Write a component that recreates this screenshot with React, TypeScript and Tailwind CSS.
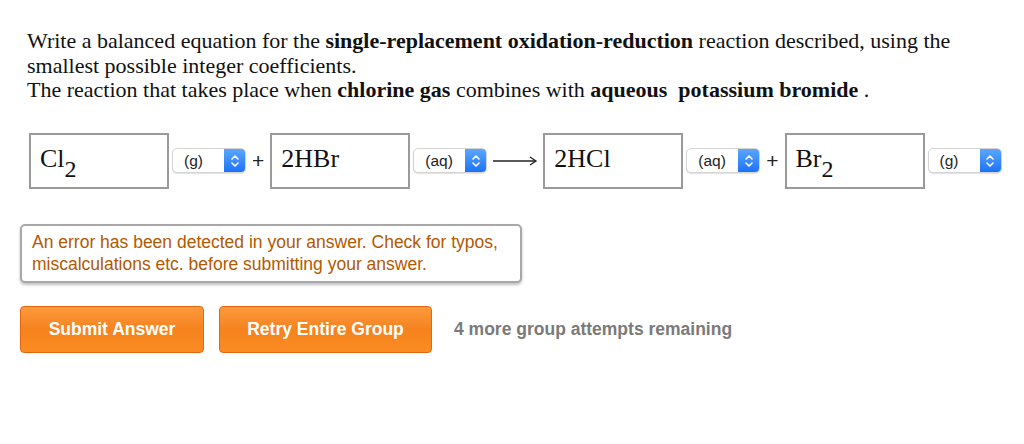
import React from 'react'

function Stepper() {
  return (
    <span className="flex h-full w-[21px] items-center justify-center rounded-r-[4px] bg-gradient-to-b from-[#5aa6ff] to-[#1a72f5]">
      <svg width="10" height="16" viewBox="0 0 10 16" fill="none" stroke="white" strokeWidth="1.6" strokeLinecap="round" strokeLinejoin="round">
        <path d="M2 6 L5 3 L8 6" />
        <path d="M2 10 L5 13 L8 10" />
      </svg>
    </span>
  )
}

function StateSelect({ value }: { value: string }) {
  return (
    <div className="ml-[3px] flex h-[25px] w-[74px] shrink-0 items-stretch rounded-[5px] border border-[#d4d4d4] bg-white shadow-[0_1px_1px_rgba(0,0,0,0.12)]">
      <span className="flex flex-1 items-center pl-[11px] font-['Liberation_Sans',Arial,sans-serif] text-[15.5px] text-[#222]">{value}</span>
      <Stepper />
    </div>
  )
}

function Species({ main, sub }: { main: string; sub?: string }) {
  return (
    <div className="flex h-[56px] w-[140px] shrink-0 items-start border-2 border-[#9a9a9a] bg-white pl-[9px] pt-[9px] font-['Liberation_Serif','Times_New_Roman',serif] text-[26px] leading-[30px] text-[#111]">
      <span>{main}</span>
      {sub && <span className="mt-[12px] text-[24px] leading-[26px]">{sub}</span>}
    </div>
  )
}

function Plus() {
  return <span className="shrink-0 px-[6px] font-['Liberation_Sans',Arial,sans-serif] text-[21px] text-[#222]">+</span>
}

export default function App() {
  return (
    <div className="min-h-screen bg-white px-[27px] pt-[29px]">
      {/* Question */}
      <div className="font-['Liberation_Serif','Times_New_Roman',serif] text-[22px] leading-[24.5px] text-[#111]">
        <p>
          Write a balanced equation for the <b>single-replacement oxidation-reduction</b> reaction described, using the
          <br />
          smallest possible integer coefficients.
        </p>
        <p>
          The reaction that takes place when <b>chlorine gas</b> combines with <b>aqueous&nbsp; potassium bromide</b> .
        </p>
      </div>

      {/* Equation */}
      <div className="mt-[30px] ml-[2px] flex items-center">
        <Species main="Cl" sub="2" />
        <StateSelect value="(g)" />
        <Plus />
        <Species main="2HBr" />
        <StateSelect value="(aq)" />
        <svg width="48" height="12" viewBox="0 0 48 12" className="mx-[4px] shrink-0" fill="none" stroke="#222" strokeWidth="1.3">
          <path d="M2 6 H44" />
          <path d="M39 2 L45 6 L39 10" />
        </svg>
        <Species main="2HCl" />
        <StateSelect value="(aq)" />
        <Plus />
        <Species main="Br" sub="2" />
        <StateSelect value="(g)" />
      </div>

      {/* Error */}
      <div className="mt-[35px] -ml-[7px] w-[502px] rounded-[5px] border-2 border-[#a8a8a8] bg-white px-[10px] pt-[5px] pb-[6px] shadow-[0_2px_3px_rgba(0,0,0,0.25)] font-['Liberation_Sans',Arial,sans-serif] text-[17.5px] leading-[22px] text-[#b35900]">
        An error has been detected in your answer. Check for typos,
        <br />
        miscalculations etc. before submitting your answer.
      </div>

      {/* Actions */}
      <div className="mt-[23px] -ml-[7px] flex items-center font-['Liberation_Sans',Arial,sans-serif] text-[17.5px] font-bold">
        <button className="h-[47px] w-[184px] rounded-[4px] border border-[#e8650f] bg-gradient-to-b from-[#fd9a3c] via-[#f5821d] to-[#fb8c24] text-white">
          Submit Answer
        </button>
        <button className="ml-[15px] h-[47px] w-[213px] rounded-[4px] border border-[#e8650f] bg-gradient-to-b from-[#fd9a3c] via-[#f5821d] to-[#fb8c24] text-white">
          Retry Entire Group
        </button>
        <span className="ml-[22px] text-[#7a7a7a]">4 more group attempts remaining</span>
      </div>
    </div>
  )
}
